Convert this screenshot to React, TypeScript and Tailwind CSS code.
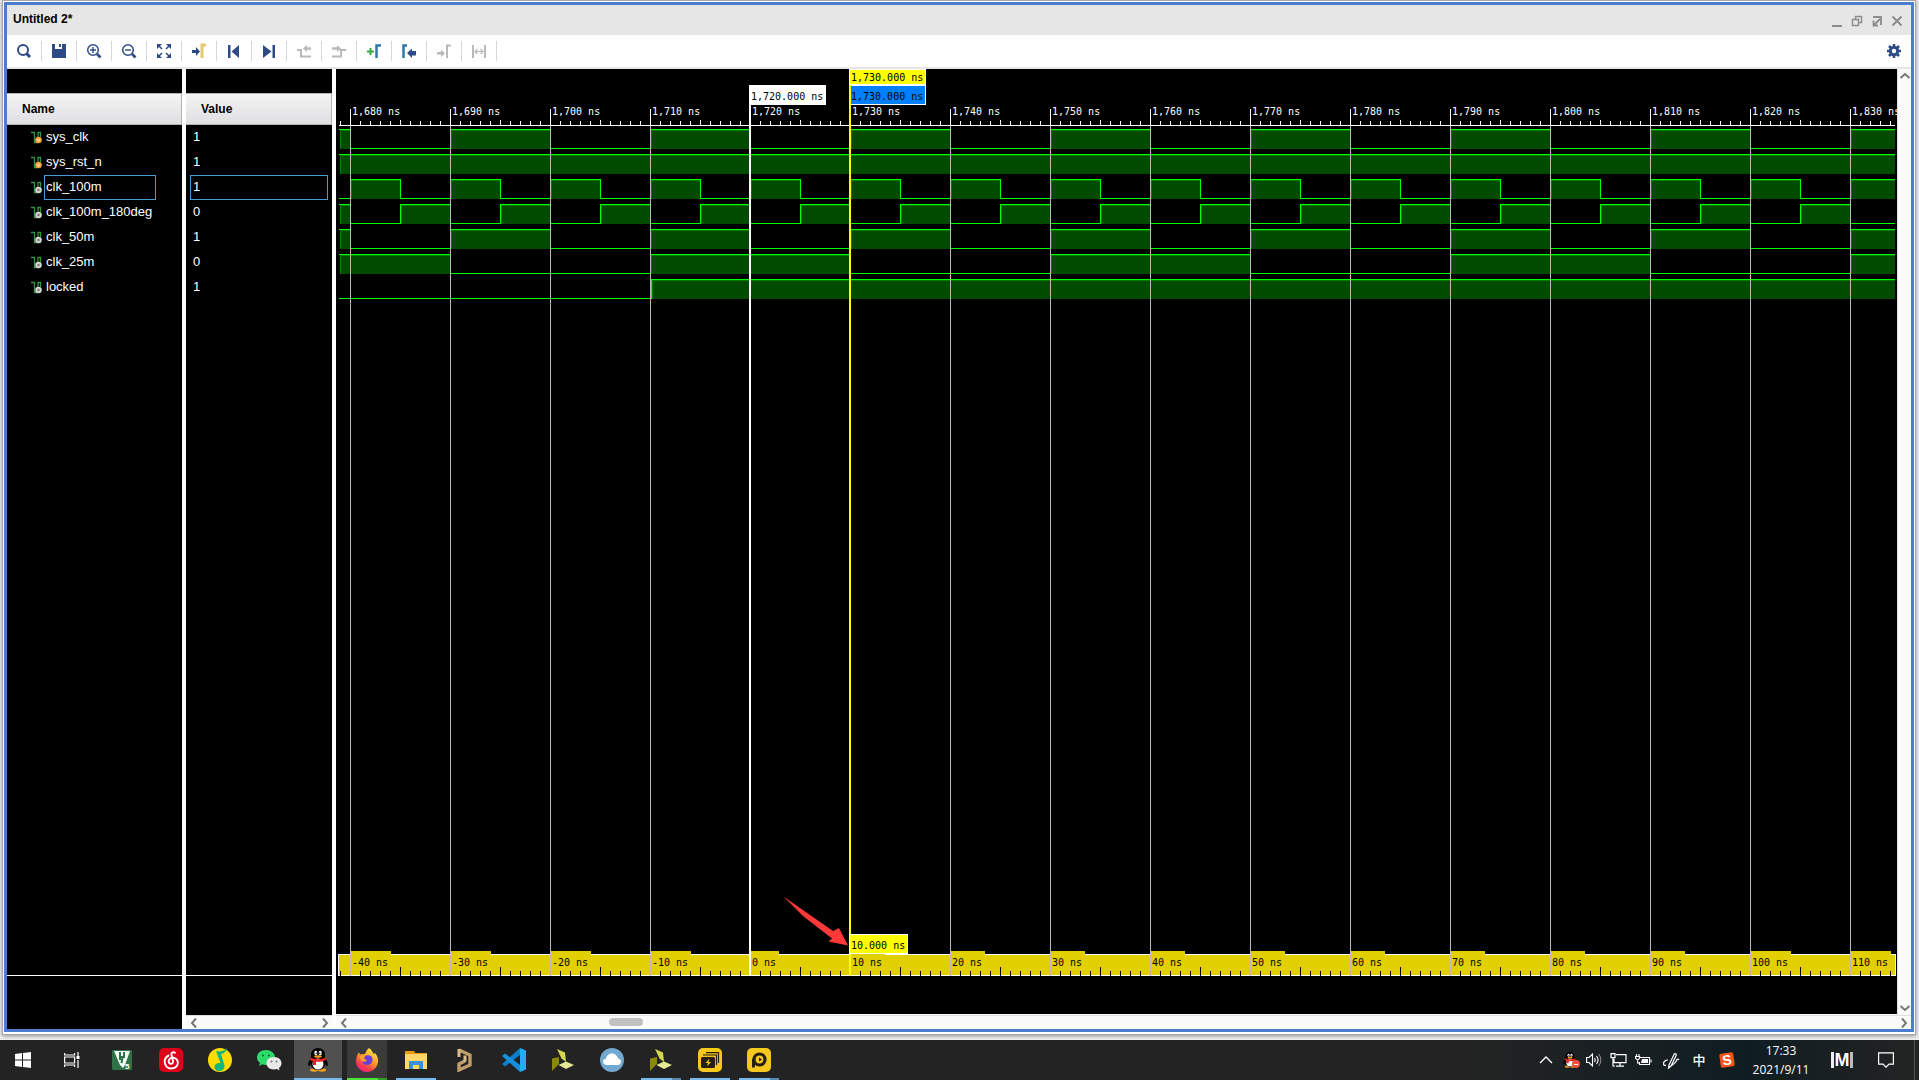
import React, { ReactNode, useLayoutEffect, useRef, useState } from "react";

const NAVY = "#2f4b86";
const MUTED = "#b9b9b9";

/* ---------- time axis ---------- */

const ORIGIN_NS = 1680;
const ORIGIN_X = 14;
const LEFT_X = 3;

const toX = (ns: number) => Math.round((ns - ORIGIN_NS) * 10 + ORIGIN_X);

const getTicks = (width: number) => {
  const ticks: number[] = [];
  for (let ns = ORIGIN_NS - 1; toX(ns) < width - 2; ns++) ticks.push(ns);
  return ticks;
};

const isMajor = (ns: number) => ns % 10 === 0;

const formatNs = (ns: number) => `${ns.toLocaleString("en-US")} ns`;

/* ---------- signals ---------- */

interface Signal {
  name: string;
  value: string;
  kind: "input" | "wire";
  isHigh: (ns: number) => boolean;
  step: number;
  offset?: number;
}

const signals: Signal[] = [
  { name: "sys_clk", value: "1", kind: "input", step: 10, isHigh: (ns) => Math.floor(ns / 10) % 2 === 1 },
  { name: "sys_rst_n", value: "1", kind: "input", step: 10, isHigh: () => true },
  { name: "clk_100m", value: "1", kind: "wire", step: 5, isHigh: (ns) => Math.floor(ns / 5) % 2 === 0 },
  { name: "clk_100m_180deg", value: "0", kind: "wire", step: 5, isHigh: (ns) => Math.floor(ns / 5) % 2 === 1 },
  { name: "clk_50m", value: "1", kind: "wire", step: 10, isHigh: (ns) => Math.floor(ns / 10) % 2 === 1 },
  { name: "clk_25m", value: "0", kind: "wire", step: 10, isHigh: (ns) => Math.floor((ns - 1670) / 20) % 2 === 0 },
  { name: "locked", value: "1", kind: "wire", step: 10, offset: 1, isHigh: (ns) => ns >= 1710 },
];

const SELECTED = "clk_100m";

const getSegments = (signal: Signal, width: number) => {
  const segments: { from: number; to: number; high: boolean }[] = [];
  const shift = signal.offset || 0;
  for (let ns = ORIGIN_NS - 10; toX(ns) < width; ns += signal.step) {
    const high = signal.isHigh(ns);
    const last = segments[segments.length - 1];
    const to = toX(ns + signal.step) + shift;
    if (to <= LEFT_X) continue;
    if (last && last.high === high) {
      last.to = to;
    } else {
      segments.push({ from: Math.max(LEFT_X, toX(ns) + shift), to, high });
    }
  }
  return segments;
};

const SignalWave = ({ signal, top, width: panelWidth }: { signal: Signal; top: number; width: number }) => (
  <g>
    {getSegments(signal, panelWidth).map((seg, i) => {
      const width = seg.to - seg.from;
      return (
        <g key={seg.from}>
          {seg.high ? (
            <>
              <rect x={seg.from + 1} y={top + 1} width={width - 1} height={19} fill="#004b00" />
              <rect x={seg.from + 1} y={top + 1} width={width - 1} height={1} fill="#007d00" />
              <rect x={seg.from + 1} y={top + 1} width={1} height={19} fill="#007d00" />
              <rect x={seg.from} y={top} width={width} height={1} fill="#00ff00" />
            </>
          ) : (
            <rect x={seg.from} y={top + 19} width={width} height={1} fill="#00ff00" />
          )}
          {i > 0 && <rect x={seg.from} y={top} width={1} height={20} fill="#00ff00" />}
        </g>
      );
    })}
  </g>
);

const TopRuler = ({ width }: { width: number }) => (
  <svg className="block h-[57px] w-full shrink-0 overflow-visible font-['DejaVu_Sans_Mono',monospace] text-[10px]">
    <rect x={LEFT_X} y={56} width={Math.max(0, width - LEFT_X - 2)} height={1} fill="#fff" />
    {getTicks(width).map((ns) => {
      const height = isMajor(ns) ? 16 : ns % 5 === 0 ? 5 : 4;
      return <rect key={ns} x={toX(ns)} y={56 - height} width={1} height={height} fill="#fff" />;
    })}
    {getTicks(width)
      .filter(isMajor)
      .map((ns) => (
        <text key={ns} x={toX(ns) + 2} y={46} fill="#fff">
          {formatNs(ns)}
        </text>
      ))}
  </svg>
);

const Waves = ({ width }: { width: number }) => (
  <div className="min-h-[200px] flex-1 pr-0.5">
    <svg className="block h-full w-full">
      {signals.map((signal, i) => (
        <SignalWave key={signal.name} signal={signal} top={3 + i * 25} width={width} />
      ))}
      {getTicks(width)
        .filter(isMajor)
        .map((ns) => (
          <rect key={ns} x={toX(ns)} y={0} width={1} height="100%" fill="#bababa" />
        ))}
    </svg>
  </div>
);

const BottomRuler = ({ width }: { width: number }) => (
  <div className="h-[25px] shrink-0 pt-[3px] pr-px pl-0.5">
    <div className="h-[22px] border border-white bg-[#e1cf00]">
      <svg className="-mt-1 -ml-[3px] block h-[25px] w-full overflow-visible font-['DejaVu_Sans_Mono',monospace] text-[10px]">
        {getTicks(width).map((ns) => {
          const height = !isMajor(ns) && ns % 5 === 0 ? 9 : 5;
          return <rect key={ns} x={toX(ns)} y={25 - height} width={1} height={height} fill="#000" />;
        })}
        {getTicks(width)
          .filter(isMajor)
          .map((ns) => {
            const label = `${ns - 1720} ns`;
            return (
              <g key={ns}>
                <rect x={toX(ns) + 1} y={0} width={label.length * 6 + 4} height={4} fill="#e1cf00" />
                <rect x={toX(ns)} y={0} width={1} height={25} fill="#bababa" />
                <text x={toX(ns) + 2} y={15} fill="#000">
                  {label}
                </text>
              </g>
            );
          })}
      </svg>
    </div>
  </div>
);

const Cursors = () => (
  <div className="font-['DejaVu_Sans_Mono',monospace] text-[10px] whitespace-nowrap text-black">
    <div className="absolute top-4 bottom-[39px] left-[413px] w-0.5 bg-white" />
    <div className="absolute top-4 bottom-[39px] left-[513px] w-0.5 bg-[#ffff00]" />
    <div className="absolute top-4 left-[413px] h-5 w-[77px] bg-white pl-0.5 leading-6">1,720.000 ns</div>
    <div className="absolute top-0 left-[513px] h-4 w-[77px] border border-white bg-[#ffff00] pl-px leading-[15px]">
      1,730.000 ns
    </div>
    <div className="absolute top-4 left-[515px] h-5 w-[75px] border border-l-0 border-white bg-[#0080ff] leading-[22px]">
      1,730.000 ns
    </div>
    <div className="absolute bottom-[61px] left-[513px] h-5 w-[59px] border border-white bg-[#ffff00] pl-px leading-[22px]">
      10.000 ns
    </div>
    <svg className="absolute bottom-[66px] left-[446px] h-[54px] w-[68px]" viewBox="0 0 68 54">
      <path d="M1.500 1.500L51 36l6-3L66 50.500l-19.500-4L50 43.500L21 21z" fill="#ff3838" />
    </svg>
  </div>
);

/* ---------- scrollbars ---------- */

const Arrow = ({ d, label }: { d: string; label: string }) => (
  <button type="button" aria-label={label} className="flex h-3.5 w-3.5 shrink-0 items-center justify-center">
    <svg width="12" height="12" viewBox="0 0 12 12" fill="none" stroke="#777" strokeWidth="2">
      <path d={d} />
    </svg>
  </button>
);

const LEFT = "M9 1.500L5 6l4 4.500";
const RIGHT = "M4 1.500L8 6l-4 4.500";
const UP = "M1.500 8L6 4l4.500 4";
const DOWN = "M1.500 4L6 8l4.500-4";

/* ---------- title bar and toolbar ---------- */

const Icon = ({ children, color = NAVY }: { children: ReactNode; color?: string }) => (
  <svg width="16" height="16" viewBox="0 0 16 16" fill="none" stroke={color} strokeWidth="2">
    {children}
  </svg>
);

const tools: { label: string; icon: ReactNode }[] = [
  {
    label: "Find",
    icon: (
      <Icon>
        <circle cx="7" cy="7" r="5" />
        <path d="M10.500 10.500L14 14" strokeWidth="3" />
      </Icon>
    ),
  },
  {
    label: "Save",
    icon: (
      <Icon>
        <path d="M1 1h3v5h7V1h4v14H1z" fill={NAVY} stroke="none" />
        <path d="M8 1h2v3H8z" fill={NAVY} stroke="none" />
      </Icon>
    ),
  },
  {
    label: "Zoom in",
    icon: (
      <Icon>
        <circle cx="7" cy="7" r="5.300" strokeWidth="1.500" />
        <path d="M4 7h6M7 4v6" strokeWidth="1.400" />
        <path d="M11 11l3.500 3.500" strokeWidth="2.600" />
      </Icon>
    ),
  },
  {
    label: "Zoom out",
    icon: (
      <Icon>
        <circle cx="7" cy="7" r="5.300" strokeWidth="1.500" />
        <path d="M4 7h6" strokeWidth="1.400" />
        <path d="M11 11l3.500 3.500" strokeWidth="2.600" />
      </Icon>
    ),
  },
  {
    label: "Zoom fit",
    icon: (
      <Icon>
        <path d="M1 1h5L1 6zM15 1v5l-5-5zM1 15v-5l5 5zM15 15h-5l5-5z" fill={NAVY} stroke="none" />
        <path d="M3 3l3 3M13 3l-3 3M3 13l3-3M13 13l-3-3" strokeWidth="1.500" />
      </Icon>
    ),
  },
  {
    label: "Go to cursor",
    icon: (
      <Icon>
        <path d="M1 7h4V4l4 4.500L5 13v-3H1z" fill={NAVY} stroke="none" />
        <path d="M11 15V2h4" stroke="#e3c96b" strokeWidth="3" />
      </Icon>
    ),
  },
  {
    label: "Go to time 0",
    icon: (
      <Icon>
        <path d="M2 2h2.500v13H2zM13 2v13L5.500 8.500z" fill={NAVY} stroke="none" />
      </Icon>
    ),
  },
  {
    label: "Go to last time",
    icon: (
      <Icon>
        <path d="M11.500 2H14v13h-2.500zM2 2v13l8.500-6.500z" fill={NAVY} stroke="none" />
      </Icon>
    ),
  },
  {
    label: "Previous transition",
    icon: (
      <Icon color={MUTED}>
        <path d="M1 7h4v6.500h10" />
        <path d="M7 5.500L11 2v2.300h4v2.500h-4V9z" fill={MUTED} stroke="none" />
      </Icon>
    ),
  },
  {
    label: "Next transition",
    icon: (
      <Icon color={MUTED}>
        <path d="M1 13.500h9V7h5" />
        <path d="M10 5.500L6 2v2.300H1v2.500h5V9z" fill={MUTED} stroke="none" />
      </Icon>
    ),
  },
  {
    label: "Add marker",
    icon: (
      <Icon>
        <path d="M1 8.500h7M4.500 5v7" stroke="#3bab3f" />
        <path d="M10.500 15V2.500H15" stroke="#2c78ad" strokeWidth="2.500" />
      </Icon>
    ),
  },
  {
    label: "Previous marker",
    icon: (
      <Icon>
        <path d="M2.500 15V2.500H6" stroke="#2c78ad" strokeWidth="2.500" />
        <path d="M6 10l5-4.500V8h4v4.500h-4V15z" fill={NAVY} stroke="none" />
      </Icon>
    ),
  },
  {
    label: "Next marker",
    icon: (
      <Icon color={MUTED}>
        <path d="M11 15V2.500h4" />
        <path d="M1 9h4V6.500L9 10.500 5 14v-2.500H1z" fill={MUTED} stroke="none" />
      </Icon>
    ),
  },
  {
    label: "Swap cursors",
    icon: (
      <Icon color={MUTED}>
        <path d="M2 2v13M14 2v13" />
        <path d="M4 8.500h8M6.500 6L4 8.500 6.500 11M9.500 6L12 8.500 9.500 11" strokeWidth="1.200" />
      </Icon>
    ),
  },
];

const TitleBar = () => (
  <div className="flex h-[30px] items-center justify-between bg-[#e6e6e6] pr-1.5 pl-1.5">
    <h1 className="pb-0.5 text-xs font-bold text-black">Untitled 2*</h1>
    <div className="flex gap-1 pt-0.5">
      {[
        { label: "Minimize", d: "M3 13h10", w: 2 },
        { label: "Restore", d: "M3.500 6.500h6v6h-6zM6.500 6V3.500h6v6H10", w: 1.4 },
        { label: "Maximize", d: "M4 4h8v8M11 6l-6 6M4.500 7.500v5H9", w: 1.8 },
        { label: "Close", d: "M3.500 3.500l9 9M12.500 3.500l-9 9", w: 2 },
      ].map((button) => (
        <button key={button.label} type="button" aria-label={button.label}>
          <svg width="16" height="16" viewBox="0 0 16 16" fill="none" stroke="#8c8c8c" strokeWidth={button.w}>
            <path d={button.d} />
          </svg>
        </button>
      ))}
    </div>
  </div>
);

const Toolbar = () => (
  <div className="flex h-[34px] items-center justify-between border-b-2 border-[#e6e6e6] bg-white">
    <div className="flex">
      {tools.map((tool) => (
        <button
          key={tool.label}
          type="button"
          aria-label={tool.label}
          className="flex h-5 w-[35px] items-center justify-center border-r border-[#d6d6d6]"
        >
          {tool.icon}
        </button>
      ))}
    </div>
    <button type="button" aria-label="Settings" className="mr-2.5">
      <svg width="14" height="14" viewBox="0 0 14 14" fill="none" stroke={NAVY}>
        <circle cx="7" cy="7" r="3.700" strokeWidth="3" />
        <path
          d="M7 0v2.500M7 11.500V14M0 7h2.500M11.500 7H14M2 2l2 2M10 10l2 2M2 12l2-2M10 4l2-2"
          strokeWidth="2.500"
        />
      </svg>
    </button>
  </div>
);

/* ---------- name and value columns ---------- */

const SignalIcon = ({ kind }: { kind: Signal["kind"] }) => (
  <svg width="12" height="13" viewBox="0 0 12 13" fill="none" className="shrink-0">
    <path d="M0 1.500h3.500v10H7v-10h2.500V6" stroke="#2f9440" strokeWidth="1.300" />
    {kind === "input" ? (
      <>
        <circle cx="7.500" cy="9" r="3.300" fill="#f3a03c" />
        <path d="M6 8l1.500 2.500L9 8" stroke="#fff3d8" strokeWidth="1" />
      </>
    ) : (
      <>
        <circle cx="7.500" cy="9" r="3.300" fill="#d4d4d4" />
        <circle cx="7.500" cy="9" r="1.200" fill="#777" />
      </>
    )}
  </svg>
);

const headerClass =
  "h-8 border border-l-0 border-[#b4b4b4] bg-linear-to-b from-[#f4f4f4] to-[#dfdfe2] p-0 text-left text-xs font-bold text-black";

const NameColumn = () => (
  <div className="flex w-[175px] shrink-0 flex-col bg-black pt-6">
    <table className="w-full border-separate border-spacing-0">
      <thead>
        <tr>
          <th className={headerClass}>
            <span className="pl-[15px]">Name</span>
          </th>
        </tr>
      </thead>
      <tbody>
        {signals.map((signal) => (
          <tr key={signal.name}>
            <td className="h-[25px] p-0">
              <div className="flex h-[25px] items-center pl-6">
                <SignalIcon kind={signal.kind} />
                <span
                  className={`ml-px flex h-[25px] w-28 items-center border pb-0.5 pl-px text-[13px] whitespace-nowrap ${
                    signal.name === SELECTED ? "border-[#4a9ad4]" : "border-transparent"
                  }`}
                >
                  {signal.name}
                </span>
              </div>
            </td>
          </tr>
        ))}
      </tbody>
    </table>
    <div className="mt-auto h-[54px] border-t border-white" />
  </div>
);

const ValueColumn = () => (
  <div className="flex w-[146px] shrink-0 flex-col bg-black pt-6">
    <table className="w-full border-separate border-spacing-0">
      <thead>
        <tr>
          <th className={headerClass}>
            <span className="pl-[15px]">Value</span>
          </th>
        </tr>
      </thead>
      <tbody>
        {signals.map((signal) => (
          <tr key={signal.name}>
            <td className="h-[25px] p-0 pr-1 pl-1">
              <div
                className={`flex h-[25px] items-center border pb-0.5 pl-0.5 text-[13px] ${
                  signal.name === SELECTED ? "border-[#4a9ad4]" : "border-transparent"
                }`}
              >
                {signal.value}
              </div>
            </td>
          </tr>
        ))}
      </tbody>
    </table>
    <div className="mt-auto h-10 border-t border-white" />
    <div className="flex h-3.5 shrink-0 items-center justify-between border-t border-[#dcdcdc] bg-[#fafafa]">
      <Arrow d={LEFT} label="Scroll values left" />
      <Arrow d={RIGHT} label="Scroll values right" />
    </div>
  </div>
);

const WavePanel = () => {
  const panelRef = useRef<HTMLDivElement>(null);
  const [width, setWidth] = useState(0);

  useLayoutEffect(() => {
    const measure = () => setWidth(panelRef.current?.clientWidth || 0);
    measure();
    window.addEventListener("resize", measure);
    return () => window.removeEventListener("resize", measure);
  }, []);

  return (
    <div className="flex min-w-0 flex-1 flex-col">
      <div className="flex flex-1">
        <div ref={panelRef} className="relative flex min-w-0 flex-1 flex-col overflow-hidden bg-black">
          <TopRuler width={width} />
          <Waves width={width} />
          <BottomRuler width={width} />
          <div className="h-[39px] shrink-0 border-b border-white" />
          <Cursors />
        </div>
        <div className="flex w-3.5 flex-col items-center justify-between border-l border-[#e0e0e0] bg-[#fafafa]">
          <Arrow d={UP} label="Scroll up" />
          <Arrow d={DOWN} label="Scroll down" />
        </div>
      </div>
      <div className="relative flex h-3.5 shrink-0 items-center justify-between border-t border-[#e0e0e0] bg-[#fafafa]">
        <Arrow d={LEFT} label="Scroll waves left" />
        <div className="absolute top-0.5 left-[273px] h-2 w-[34px] rounded bg-[#c1c1c1]" />
        <Arrow d={RIGHT} label="Scroll waves right" />
      </div>
    </div>
  );
};

/* ---------- taskbar ---------- */

const Penguin = ({ size }: { size: number }) => (
  <svg width={size} height={size} viewBox="0 0 24 24">
    <ellipse cx="8" cy="22" rx="4" ry="1.700" fill="#f7a11b" />
    <ellipse cx="16" cy="22" rx="4" ry="1.700" fill="#f7a11b" />
    <path d="M5 10c-2.500 3-3.500 6-2.500 8 1 .5 2-1 2.500-2 .5 4 3 6 7 6s6.500-2 7-6c.5 1 1.500 2.500 2.500 2 1-2 0-5-2.500-8z" fill="#050505" />
    <ellipse cx="12" cy="16" rx="5.500" ry="5.500" fill="#fff" />
    <path d="M12 0c-4.500 0-7 3-7 7v3h14V7c0-4-2.500-7-7-7z" fill="#050505" />
    <ellipse cx="9.800" cy="5" rx="1.500" ry="2.200" fill="#fff" />
    <ellipse cx="14.200" cy="5" rx="1.500" ry="2.200" fill="#fff" />
    <circle cx="10.200" cy="5.300" r=".7" />
    <circle cx="13.800" cy="5.300" r=".7" />
    <ellipse cx="12" cy="8.500" rx="3.800" ry="1.300" fill="#f7a11b" />
    <path d="M4.500 9.500c4 2.300 11 2.300 15 0l.5 2.500c-3 1.500-6 2-10 1.800V17H7v-3.600c-1.200-.3-2.300-.8-3-1.400z" fill="#e62322" />
  </svg>
);

const XilinxLogo = () => (
  <svg width="24" height="24" viewBox="0 0 24 24">
    <path d="M6 1l8 3.500L15 14l-4.500-3.500z" fill="#d3d750" />
    <path d="M1 10.500l7-1.500v7l-7 7z" fill="#8a8a0a" />
    <path d="M7.500 17l7.500-3.500 8 3.500-8 4z" fill="#e6e994" />
  </svg>
);

interface TaskItem {
  label: string;
  icon: ReactNode;
  active?: string;
  bars?: string[];
}

const BLUE_BAR = "w-10 bg-[#76b9ed]";

const tasks: TaskItem[] = [
  {
    label: "Keil uVision5",
    icon: (
      <svg width="22" height="22" viewBox="0 0 22 22">
        <rect x="1" y="1" width="20" height="20" rx="1" fill="#2e7146" />
        <path d="M3 2h16l-5 14-2 3-3-3z" fill="#f4f8f4" />
        <path d="M9 3v5h4V3M9 8v3M11.500 8l-1 6" fill="none" stroke="#2e7146" strokeWidth="2" />
        <text x="14" y="20" fontSize="8" fontWeight="700" fill="#fff">5</text>
      </svg>
    ),
  },
  {
    label: "NetEase Cloud Music",
    icon: (
      <svg width="24" height="24" viewBox="0 0 24 24" fill="none" stroke="#fff" strokeWidth="1.900" strokeLinecap="round">
        <rect width="24" height="24" rx="5" fill="#dd001b" stroke="none" />
        <path d="M16 4.800c-2-1.300-4 0-3.600 1.800l1.600 6.200c.5 2-1 3-2 3-1.600 0-2.700-1.400-2.300-3 .5-2.300 3-3.800 5.500-3 4 1.300 4.600 5.600 2.500 8.300-2.500 3-7.500 3.300-10.200.5-3-3.200-2.500-8.800 2-11" />
      </svg>
    ),
  },
  {
    label: "QQ Music",
    icon: (
      <svg width="24" height="24" viewBox="0 0 24 24">
        <circle cx="12" cy="12" r="12" fill="#ffdc00" />
        <path d="M8 3c4 1 8 0 11-3-1 4-3 5.500-6 6l3.500 11.500c.5 3-2 5.500-5 5.500-2.500 0-5-1.500-5-4 0-3 3-4.500 6-4z" fill="#12b67c" />
      </svg>
    ),
  },
  {
    label: "WeChat",
    icon: (
      <svg width="26" height="24" viewBox="0 0 26 24">
        <path d="M10 2C4.500 2 1 5.500 1 9.500c0 2.300 1.200 4 3 5.500l-1 3 3.500-1.700c1 .4 2.300.7 3.500.7 5 0 9-3.300 9-7.500S15 2 10 2z" fill="#2ddb6c" />
        <path d="M18 9c-4.500 0-7.500 2.800-7.500 6.300s3 6.200 7.500 6.200c1 0 2-.2 3-.5l2.500 1.500-.5-2.500c1.500-1 2.500-2.700 2.500-4.700C25.500 11.800 22.500 9 18 9z" fill="#e9e9e9" />
        <g fill="#146b36">
          <circle cx="7" cy="7.500" r="1.100" />
          <circle cx="13" cy="7.500" r="1.100" />
        </g>
        <g fill="#777">
          <circle cx="15.500" cy="13.500" r="1" />
          <circle cx="20.500" cy="13.500" r="1" />
        </g>
      </svg>
    ),
  },
  { label: "QQ", icon: <Penguin size={24} />, active: "w-12 bg-[#505050]", bars: ["w-12 bg-[#76b9ed]"] },
  {
    label: "Firefox",
    active: "w-10 bg-[#3b3b3b]",
    bars: ["w-[31px] bg-[#4ce038]", "w-[9px] bg-[#2f9e25]"],
    icon: (
      <svg width="24" height="24" viewBox="0 0 24 24">
        <defs>
          <linearGradient id="fox" x1="0.800" y1="0" x2="0.200" y2="1">
            <stop offset="0" stopColor="#fff04a" />
            <stop offset="0.450" stopColor="#ff9a1f" />
            <stop offset="0.750" stopColor="#ff3e50" />
            <stop offset="1" stopColor="#e51a8a" />
          </linearGradient>
        </defs>
        <path d="M14 0c3 2 3.500 4.500 5 6l1-1c2.500 3 3.500 6 3 9.500C22 20 17.500 24 12 24S1 19.500 1 13.500C1 10 2 7 4 4c.2 1.300.5 2 1.500 2.500C7 5.500 9 6 10 6c1-2.500 2-4.500 4-6z" fill="url(#fox)" />
        <path d="M11 7.500c4.500-1 7 1.500 6.500 5-.4 3-3 4.500-5.500 4.500-3 0-4.800-2-5-4 1.500 1 3.500.7 5-.5-1.500-.3-2.500-1.500-4-1.500.5-1.500 1.500-2.500 3-3.500z" fill="#6b3fd6" />
        <path d="M4 9c1.500-2 4-2.500 6.500-1.500L9 10.500l3 2c-1.500 1.200-3.500 1.500-5 .5" fill="#ff9d2e" />
      </svg>
    ),
  },
  {
    label: "File Explorer",
    bars: [BLUE_BAR],
    icon: (
      <svg width="24" height="24" viewBox="0 0 24 24">
        <path d="M1 3h9l1.500 2H23v16H1z" fill="#e79a12" />
        <path d="M1 6h22v15H1z" fill="#ffd768" />
        <path d="M5 13h14v8h-4v-4H9v4H5z" fill="#3a92dc" />
      </svg>
    ),
  },
  {
    label: "Altium Designer",
    icon: (
      <svg width="24" height="24" viewBox="0 0 24 24" fill="none" stroke="#bf9d68" strokeWidth="3.400">
        <path d="M6 2l11 5v10L6 22v-6l6-3" />
        <path d="M6 1v8M12 7.500v6" stroke="#d8bd8c" strokeWidth="3" />
      </svg>
    ),
  },
  {
    label: "Visual Studio Code",
    icon: (
      <svg width="24" height="24" viewBox="0 0 24 24">
        <path d="M18 0v7L3 18.500 0 16z" fill="#0d7fc9" />
        <path d="M18 24v-7L3 5.500 0 8z" fill="#1690dc" />
        <path d="M18 0l6 2.500v19L18 24z" fill="#29a9f2" />
      </svg>
    ),
  },
  { label: "Vivado", icon: <XilinxLogo /> },
  {
    label: "Cloud drive",
    icon: (
      <svg width="24" height="24" viewBox="0 0 24 24">
        <circle cx="12" cy="12" r="12" fill="#72a9d0" />
        <path d="M6.500 17C4.500 17 3 15.500 3 13.800s1.300-3 3-3C6.500 7.500 9 5.500 12 5.500s5.300 2 6 5c1.800.2 3 1.500 3 3.200S19.700 17 17.800 17z" fill="#fff" />
      </svg>
    ),
  },
  { label: "Vivado simulator", icon: <XilinxLogo />, bars: ["w-[31px] bg-[#76b9ed]", "w-[9px] bg-[#5a88ab]"] },
  {
    label: "Screen capture",
    bars: [BLUE_BAR],
    icon: (
      <svg width="24" height="24" viewBox="0 0 24 24" fill="none" stroke="#241f10" strokeWidth="1.200">
        <rect width="24" height="24" rx="5" fill="#f6c71e" stroke="none" />
        <rect x="3" y="9" width="14" height="11" rx="1.500" fill="#241f10" stroke="none" />
        <path d="M5 7h13.500v10M8 4.700h12.500V15" />
        <path d="M11.500 10.500l-4 4.500h2.500l-1 3.500 4-4.500h-2.500z" fill="#f6c71e" stroke="none" />
      </svg>
    ),
  },
  {
    label: "PotPlayer",
    bars: ["w-[31px] bg-[#76b9ed]", "w-[9px] bg-[#5a88ab]"],
    icon: (
      <svg width="24" height="24" viewBox="0 0 24 24" fill="none" stroke="#241f10">
        <rect width="24" height="24" rx="5" fill="#f6c71e" stroke="none" />
        <circle cx="12.500" cy="11.500" r="5.500" strokeWidth="3.200" />
        <path d="M6.500 11v8.500" strokeWidth="3" />
        <path d="M12 9.500v4l3-2z" fill="#241f10" stroke="none" />
      </svg>
    ),
  },
];

const Taskbar = () => (
  <footer className="flex h-10 shrink-0 bg-[#232323] text-white">
    <button type="button" aria-label="Start" className="flex w-[46px] items-center justify-center">
      <svg width="16" height="16" viewBox="0 0 16 16" fill="#fff">
        <path d="M0 2l7-1v6.500H0zM8 .900L16 0v7.500H8zM0 8.500h7V15l-7-1zM8 8.500h8V16l-8-.900z" />
      </svg>
    </button>
    <button type="button" aria-label="Task view" className="flex w-[51px] items-center justify-center">
      <svg width="16" height="16" viewBox="0 0 16 16" fill="none" stroke="#fff" strokeWidth="1.200">
        <path d="M.6 1v2h10V1M.6 15v-2h10v2M.6 5h10v6H.6zM14 0v4M14 8v8" />
        <path d="M14 4v3" strokeWidth="3" />
      </svg>
    </button>
    {tasks.map((task) => (
      <button
        key={task.label}
        type="button"
        aria-label={task.label}
        className="flex w-[49px] items-stretch justify-center"
      >
        <span className={`flex flex-col ${task.active || "w-10"}`}>
          <span className="flex flex-1 items-center justify-center">{task.icon}</span>
          <span className="-mt-0.5 flex h-0.5">
            {task.bars?.map((bar) => (
              <span key={bar} className={bar} />
            ))}
          </span>
        </span>
      </button>
    ))}
    <div className="flex flex-1 items-center justify-end bg-linear-to-r from-[#232323] from-60% via-[#0f1d22] via-85% to-[#232323]">
      <button type="button" aria-label="Show hidden icons" className="flex w-6 justify-center">
        <svg width="14" height="8" viewBox="0 0 14 8" fill="none" stroke="#fff" strokeWidth="1.400">
          <path d="M1 7l6-6 6 6" />
        </svg>
      </button>
      <button type="button" aria-label="QQ status" className="relative flex w-6 justify-center">
        <Penguin size={16} />
        <span className="absolute top-2 right-0.5 flex h-2 w-2 items-center justify-center rounded-full bg-[#f0503c]">
          <span className="h-px w-1 bg-white" />
        </span>
      </button>
      <button type="button" aria-label="Volume" className="flex w-6 justify-center">
        <svg width="16" height="14" viewBox="0 0 16 14" fill="none" stroke="#fff" strokeWidth="1.100">
          <path d="M.6 4.500h2.400L6.500 1v12L3 9.500H.6zM8.500 5c.8 1.200.8 2.800 0 4" />
          <path d="M10.500 3c1.900 2.400 1.900 5.600 0 8" />
          <path d="M12.700 1c2.800 3.500 2.800 8.500 0 12" stroke="#888" />
        </svg>
      </button>
      <button type="button" aria-label="Network" className="flex w-[25px] justify-center">
        <svg width="17" height="14" viewBox="0 0 17 14" fill="none" stroke="#fff" strokeWidth="1.200">
          <path d="M6 1.600h10v8H4V6M10 9.600V13M6 13.200h8M1 .600h4v4H1zM3 5v8h2" />
        </svg>
      </button>
      <button type="button" aria-label="Battery" className="flex w-6 justify-center">
        <svg width="17" height="12" viewBox="0 0 17 12" fill="none" stroke="#fff" strokeWidth="1.100">
          <path d="M5 3.500h9.500v7h-10V8M16 5.500v3M1.500 0v2M4 0v2M.6 2.500h4v1.800l-2 1.700-2-1.700zM2.600 6v3H5" />
          <path d="M7 5h6v4H6z" fill="#fff" stroke="none" />
        </svg>
      </button>
      <button type="button" aria-label="Pen workspace" className="flex w-8 justify-center">
        <svg width="17" height="17" viewBox="0 0 17 17" fill="none" stroke="#fff" strokeWidth="1.200">
          <path d="M6 13L11 2.500c.6-1.500 2.600-.7 2.200.8L8 14l-2.500 2zM5 8c-3 0-4.500 2-4.500 3.500S1.500 14 3 13M8 14c2-1 5-4 5.500-5.500S15 6.500 16 8" />
        </svg>
      </button>
      <button
        type="button"
        className="flex w-6 justify-center font-['Noto_Sans_CJK_SC',sans-serif] text-[13px] leading-4 font-medium"
      >
        中
      </button>
      <button type="button" aria-label="Sogou input" className="flex w-8 justify-center">
        <svg width="16" height="16" viewBox="0 0 16 16">
          <rect x="1" y="1" width="14" height="14" rx="2" fill="#f2541b" transform="rotate(-8 8 8)" />
          <text x="8" y="13" textAnchor="middle" fontSize="14" fontWeight="700" fill="#fff" transform="rotate(-8 8 8)">
            S
          </text>
        </svg>
      </button>
      <button
        type="button"
        className="flex h-10 w-[76px] flex-col items-center justify-center font-['Open_Sans',sans-serif] text-xs leading-[19px]"
      >
        <span>17:33</span>
        <span>2021/9/11</span>
      </button>
      <button type="button" aria-label="Monitor app" className="flex w-[46px] justify-center">
        <svg width="22" height="18" viewBox="0 0 22 18">
          <rect x="0" y="1" width="3" height="16" fill="#eee" />
          <rect x="19" y="1" width="3" height="16" fill="#bbb" />
          <text x="11" y="15" textAnchor="middle" fontSize="18" fontWeight="700" fill="#fff">
            M
          </text>
        </svg>
      </button>
      <button type="button" aria-label="Notifications" className="mr-[7px] flex w-[42px] justify-center">
        <svg width="16" height="16" viewBox="0 0 16 16" fill="none" stroke="#fff" strokeWidth="1.200">
          <path d="M.6.800h14.800v11.400H11L8 15.200l-3-3H.6z" />
        </svg>
      </button>
      <div className="h-full w-[5px] border-l border-[#555]" />
    </div>
  </footer>
);

const App = () => (
  <div className="flex min-h-screen flex-col bg-[#efefef] font-['Liberation_Sans',Arial,sans-serif] text-xs text-white">
    <main className="mr-[3px] mb-[5px] ml-0.5 flex flex-1 flex-col border border-[#a6a6a6] bg-white p-px pb-0.5 shadow-[0_1px_4px_rgba(0,0,0,0.4)]">
      <div className="flex flex-1 flex-col border-[3px] border-[#4a7ccf]">
        <TitleBar />
        <Toolbar />
        <div className="flex flex-1 gap-1 bg-white">
          <NameColumn />
          <ValueColumn />
          <WavePanel />
        </div>
      </div>
    </main>
    <Taskbar />
  </div>
);

export default App;
